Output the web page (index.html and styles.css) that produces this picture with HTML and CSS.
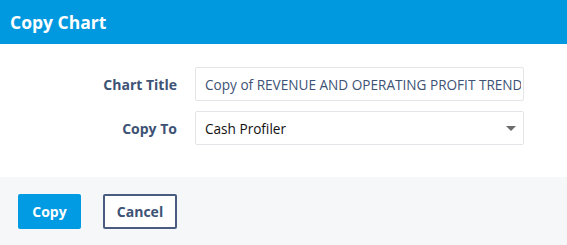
FILE: index.html
```html
<!DOCTYPE html>
<html lang="en">
<head>
    <meta charset="UTF-8">
    <meta name="viewport" content="width=device-width, initial-scale=1.0">
    <title>Copy Chart</title>
    <link rel="stylesheet" href="styles.css">
</head>
<body>
    <div class="modal">
        <div class="modal-header">Copy Chart</div>
        <form class="modal-body">
            <div class="form-row">
                <label for="chart-title">Chart Title</label>
                <input type="text" id="chart-title" value="Copy of REVENUE AND OPERATING PROFIT TRENDS">
            </div>
            <div class="form-row">
                <label for="copy-to">Copy To</label>
                <div class="select-wrap">
                    <select id="copy-to">
                        <option>Cash Profiler</option>
                    </select>
                    <span class="select-arrow"></span>
                </div>
            </div>
        </form>
        <div class="modal-footer">
            <button type="button" class="btn btn-primary">Copy</button>
            <button type="button" class="btn btn-outline">Cancel</button>
        </div>
    </div>
</body>
</html>
```

FILE: styles.css
```css
body { margin: 0; font-family: "Open Sans", Arial, sans-serif; background-color: #fff; }
.modal { width: 567px; height: 245px; display: flex; flex-direction: column; }
.modal-header { height: 44px; background-color: #0099e0; color: #fff; font-size: 17.5px; font-weight: bold; padding: 0 10px; display: flex; align-items: center; box-sizing: border-box; }
.modal-body { flex: none; height: 133px; padding-top: 23px; box-sizing: border-box; margin: 0; }
.form-row { display: flex; align-items: center; margin-bottom: 10px; }
.form-row label { width: 195px; text-align: right; padding-right: 18px; box-sizing: border-box; font-size: 14px; font-weight: bold; color: #3d5275; }
input[type="text"], select { width: 329px; height: 34px; border: 1px solid #e3e5e8; border-radius: 2px; box-sizing: border-box; padding: 0 9px; font-family: inherit; font-size: 13.6px; background-color: #fff; outline: none; }
input[type="text"] { color: #3d5275; padding-right: 2px; }
select { appearance: none; -webkit-appearance: none; color: #111; }
.select-wrap { position: relative; }
.select-arrow { position: absolute; right: 8px; top: 15px; width: 0; height: 0; border-left: 5px solid transparent; border-right: 5px solid transparent; border-top: 5px solid #6b6b6b; pointer-events: none; }
.modal-footer { flex: 1; background-color: #f6f7f9; padding: 17px 18px 0; display: flex; gap: 22px; align-items: flex-start; }
.btn { height: 35px; font-family: inherit; font-size: 14px; font-weight: bold; border-radius: 2px; cursor: pointer; box-sizing: border-box; }
.btn-primary { width: 63px; background-color: #009be2; color: #fff; border: none; }
.btn-outline { width: 74px; background-color: #fff; color: #3d5275; border: 2px solid #4a5d80; }
```
